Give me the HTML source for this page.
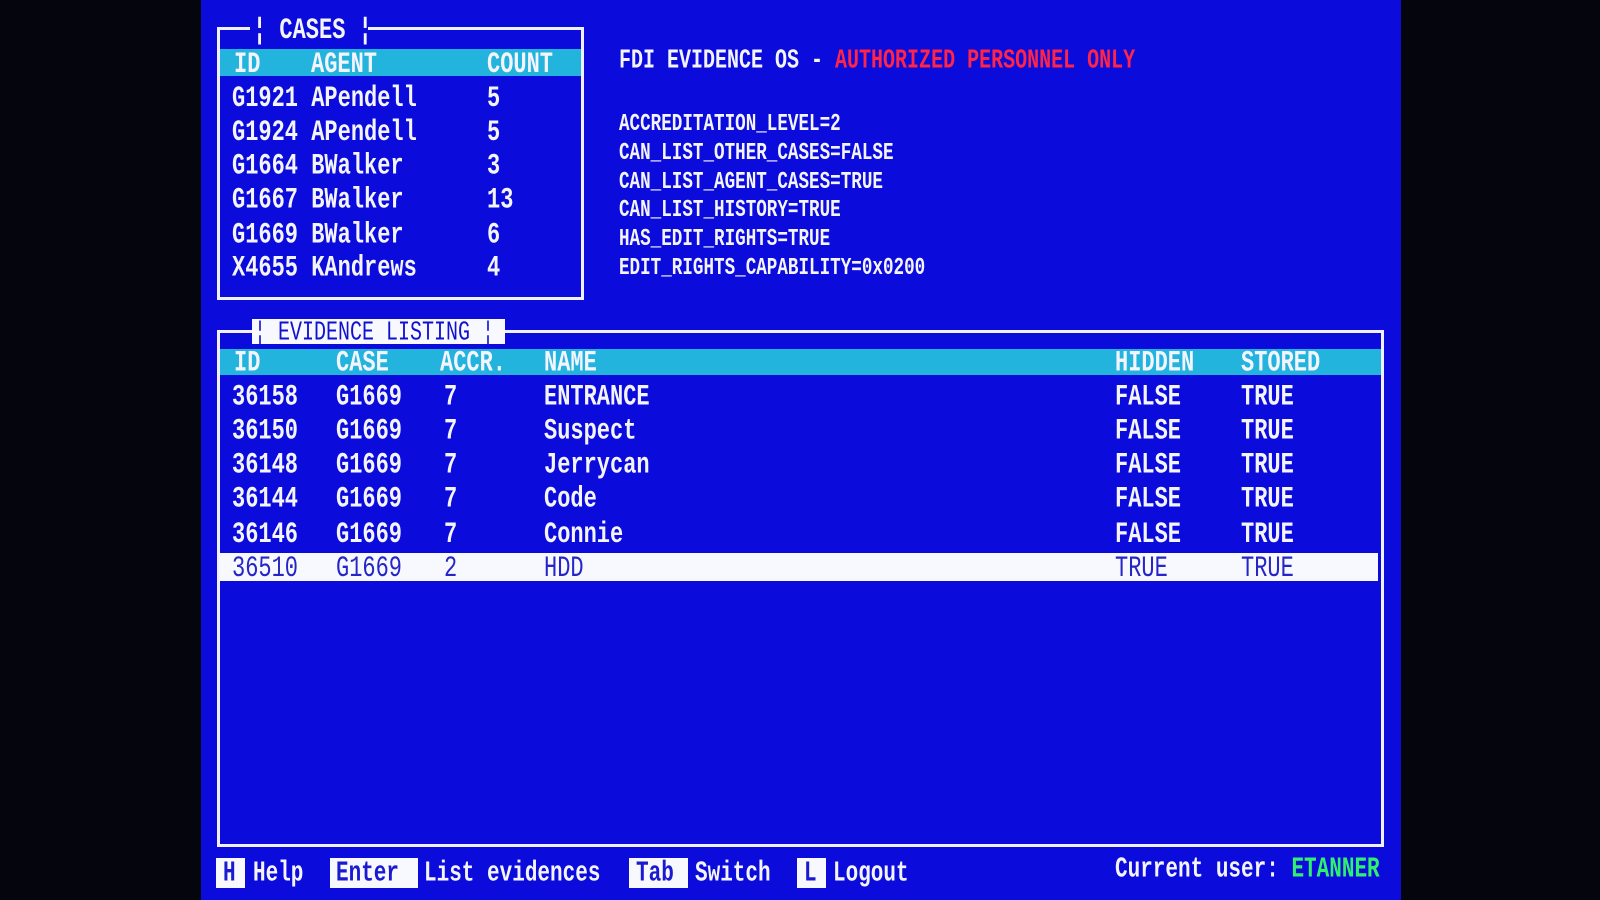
<!DOCTYPE html>
<html><head><meta charset="utf-8"><style>
html,body{margin:0;padding:0;width:1600px;height:900px;overflow:hidden;background:#05050d;}
#scr{position:absolute;left:201px;top:0;width:1200px;height:900px;background:#0b0bdc;}
.a{position:absolute;margin-top:2px;font-family:"Liberation Mono",monospace;font-weight:bold;color:#f4f4ff;white-space:pre;line-height:1;transform:scaleY(1.35);transform-origin:left center;}
.f22{font-size:22px}.f18{font-size:17.6px}.f20{font-size:20px}.f21{font-size:21px}
.box{position:absolute;border:3px solid #f0f0ff;box-sizing:border-box;}
.bar{position:absolute;background:#22b4dc;}
.w{position:absolute;background:#f8f8ff;}
</style></head><body>
<div id="scr"></div>
<!-- CASES box -->
<div class="box" style="left:217px;top:27px;width:367px;height:273px"></div>
<div style="position:absolute;left:250px;top:18px;width:118px;height:20px;background:#0b0bdc"></div>
<div class="a f22" style="left:253px;top:18px">¦ CASES ¦</div>
<div class="bar" style="left:220px;top:49px;width:361px;height:27px"></div>
<div class="a f22" style="left:234px;top:52px">ID</div>
<div class="a f22" style="left:311px;top:52px">AGENT</div>
<div class="a f22" style="left:487px;top:52px">COUNT</div>
<div class="a f22" style="left:232px;top:86px">G1921 APendell</div><div class="a f22" style="left:487px;top:86px">5</div>
<div class="a f22" style="left:232px;top:120px">G1924 APendell</div><div class="a f22" style="left:487px;top:120px">5</div>
<div class="a f22" style="left:232px;top:154px">G1664 BWalker</div><div class="a f22" style="left:487px;top:154px">3</div>
<div class="a f22" style="left:232px;top:188px">G1667 BWalker</div><div class="a f22" style="left:487px;top:188px">13</div>
<div class="a f22" style="left:232px;top:223px">G1669 BWalker</div><div class="a f22" style="left:487px;top:223px">6</div>
<div class="a f22" style="left:232px;top:256px">X4655 KAndrews</div><div class="a f22" style="left:487px;top:256px">4</div>
<!-- info -->
<div class="a f20" style="left:619px;top:50px">FDI EVIDENCE OS - <span style="color:#ff2448">AUTHORIZED PERSONNEL ONLY</span></div>
<div class="a f18" style="left:619px;top:115px">ACCREDITATION_LEVEL=2</div>
<div class="a f18" style="left:619px;top:144px">CAN_LIST_OTHER_CASES=FALSE</div>
<div class="a f18" style="left:619px;top:173px">CAN_LIST_AGENT_CASES=TRUE</div>
<div class="a f18" style="left:619px;top:201px">CAN_LIST_HISTORY=TRUE</div>
<div class="a f18" style="left:619px;top:230px">HAS_EDIT_RIGHTS=TRUE</div>
<div class="a f18" style="left:619px;top:259px">EDIT_RIGHTS_CAPABILITY=0x0200</div>
<!-- Evidence box -->
<div class="box" style="left:217px;top:330px;width:1167px;height:517px"></div>
<div class="w" style="left:252px;top:319px;width:253px;height:25px"></div>
<div class="a f20" style="left:254px;top:322px;color:#1010d0;font-weight:normal">¦ EVIDENCE LISTING ¦</div>
<div class="bar" style="left:220px;top:349px;width:1161px;height:26px"></div>
<div class="a f22" style="left:234px;top:351px">ID</div>
<div class="a f22" style="left:336px;top:351px">CASE</div>
<div class="a f22" style="left:440px;top:351px">ACCR.</div>
<div class="a f22" style="left:544px;top:351px">NAME</div>
<div class="a f22" style="left:1115px;top:351px">HIDDEN</div>
<div class="a f22" style="left:1241px;top:351px">STORED</div>
<div class="a f22" style="left:232px;top:385px">36158</div><div class="a f22" style="left:336px;top:385px">G1669</div><div class="a f22" style="left:444px;top:385px">7</div><div class="a f22" style="left:544px;top:385px">ENTRANCE</div><div class="a f22" style="left:1115px;top:385px">FALSE</div><div class="a f22" style="left:1241px;top:385px">TRUE</div>
<div class="a f22" style="left:232px;top:419px">36150</div><div class="a f22" style="left:336px;top:419px">G1669</div><div class="a f22" style="left:444px;top:419px">7</div><div class="a f22" style="left:544px;top:419px">Suspect</div><div class="a f22" style="left:1115px;top:419px">FALSE</div><div class="a f22" style="left:1241px;top:419px">TRUE</div>
<div class="a f22" style="left:232px;top:453px">36148</div><div class="a f22" style="left:336px;top:453px">G1669</div><div class="a f22" style="left:444px;top:453px">7</div><div class="a f22" style="left:544px;top:453px">Jerrycan</div><div class="a f22" style="left:1115px;top:453px">FALSE</div><div class="a f22" style="left:1241px;top:453px">TRUE</div>
<div class="a f22" style="left:232px;top:487px">36144</div><div class="a f22" style="left:336px;top:487px">G1669</div><div class="a f22" style="left:444px;top:487px">7</div><div class="a f22" style="left:544px;top:487px">Code</div><div class="a f22" style="left:1115px;top:487px">FALSE</div><div class="a f22" style="left:1241px;top:487px">TRUE</div>
<div class="a f22" style="left:232px;top:522px">36146</div><div class="a f22" style="left:336px;top:522px">G1669</div><div class="a f22" style="left:444px;top:522px">7</div><div class="a f22" style="left:544px;top:522px">Connie</div><div class="a f22" style="left:1115px;top:522px">FALSE</div><div class="a f22" style="left:1241px;top:522px">TRUE</div>
<div class="w" style="left:219px;top:553px;width:1159px;height:28px"></div>
<div class="a f22" style="left:232px;top:556px;color:#2525c8;font-weight:normal">36510</div><div class="a f22" style="left:336px;top:556px;color:#2525c8;font-weight:normal">G1669</div><div class="a f22" style="left:444px;top:556px;color:#2525c8;font-weight:normal">2</div><div class="a f22" style="left:544px;top:556px;color:#2525c8;font-weight:normal">HDD</div><div class="a f22" style="left:1115px;top:556px;color:#2525c8;font-weight:normal">TRUE</div><div class="a f22" style="left:1241px;top:556px;color:#2525c8;font-weight:normal">TRUE</div>
<!-- bottom bar -->
<div class="w" style="left:216px;top:858px;width:29px;height:30px"></div>
<div class="a f21" style="left:223px;top:862px;color:#1a1ad0">H</div>
<div class="a f21" style="left:253px;top:862px">Help</div>
<div class="w" style="left:330px;top:858px;width:88px;height:30px"></div>
<div class="a f21" style="left:336px;top:862px;color:#1a1ad0">Enter</div>
<div class="a f21" style="left:424px;top:862px">List evidences</div>
<div class="w" style="left:629px;top:858px;width:59px;height:30px"></div>
<div class="a f21" style="left:636px;top:862px;color:#1a1ad0">Tab</div>
<div class="a f21" style="left:695px;top:862px">Switch</div>
<div class="w" style="left:797px;top:858px;width:29px;height:30px"></div>
<div class="a f21" style="left:804px;top:862px;color:#1a1ad0">L</div>
<div class="a f21" style="left:833px;top:862px">Logout</div>
<div class="a f21" style="left:1115px;top:858px">Current user: <span style="color:#30f070">ETANNER</span></div>
</body></html>
